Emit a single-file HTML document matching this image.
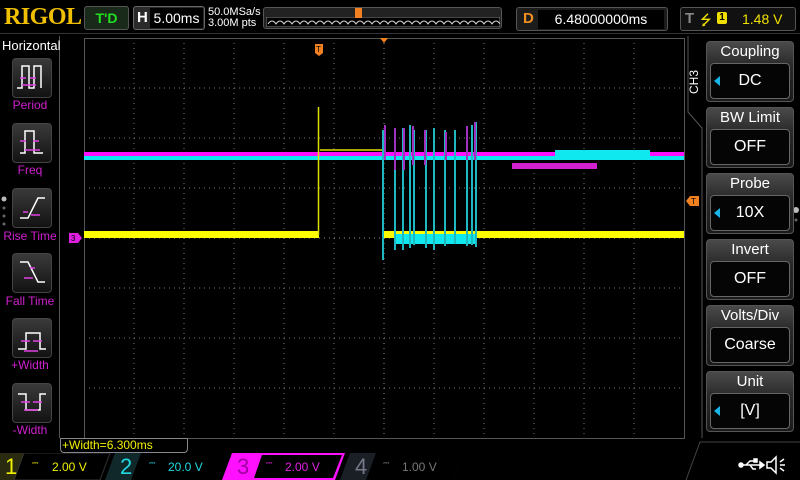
<!DOCTYPE html>
<html><head><meta charset="utf-8"><style>
*{margin:0;padding:0;box-sizing:border-box}
body{width:800px;height:480px;background:#000;overflow:hidden;position:relative;font-family:"Liberation Sans",sans-serif;color:#fff}
.a{position:absolute}
.lbl{position:absolute;left:0;width:60px;text-align:center;color:#d020d0;font-size:12px}
.btn{position:absolute;left:12px;width:40px;height:40px;border-radius:4px;background:linear-gradient(#3a3a3a,#121212);border:1px solid #444}
.mi{position:absolute;left:706px;width:88px;height:61px;border-radius:4px;background:linear-gradient(#4a4a4a,#2a2a2a 40%,#1a1a1a);border:1px solid #555}
.mi .h{position:absolute;top:1px;width:100%;text-align:center;font-size:15px;color:#fff}
.mi .v{position:absolute;left:3px;top:21px;width:80px;height:36px;border:1px solid #666;border-radius:4px;background:#050505;text-align:center;font-size:16px;line-height:34px}
.tri{position:absolute;left:3px;top:12px;width:0;height:0;border-top:5px solid transparent;border-bottom:5px solid transparent;border-right:6px solid #19b4e6}
</style></head><body>
<div class="a" style="left:4px;top:4px;font-family:'Liberation Serif',serif;font-weight:bold;font-size:24px;color:#f0c000;letter-spacing:-0.5px">RIGOL</div>
<div class="a" style="left:84px;top:6px;width:45px;height:24px;border:1px solid #555;border-radius:3px;background:#1a2a1a;color:#20e020;font-weight:bold;font-size:14px;text-align:center;line-height:22px">T'D</div>
<div class="a" style="left:133px;top:6px;width:72px;height:24px;border:1px solid #666;border-radius:3px;background:#2a2a2a"></div>
<div class="a" style="left:137px;top:9px;font-weight:bold;font-size:15px">H</div>
<div class="a" style="left:150px;top:8px;width:53px;height:20px;background:#000;font-size:14px;line-height:20px;text-align:center">5.00ms</div>
<div class="a" style="left:208px;top:7px;font-size:11px;line-height:11px">50.0MSa/s<br>3.00M pts</div>
<div class="a" style="left:263px;top:7px;width:239px;height:22px;border:1px solid #555;border-radius:3px;background:#222"></div>
<svg class="a" style="left:266px;top:17px" width="234" height="10"><rect x="0" y="0" width="234" height="10" fill="#000" stroke="#888"/><path d="M2 7 q4 -6 8 0 q4 -6 8 0 q4 -6 8 0 q4 -6 8 0 q4 -6 8 0 q4 -6 8 0 q4 -6 8 0 q4 -6 8 0 q4 -6 8 0 q4 -6 8 0 q4 -6 8 0 q4 -6 8 0 q4 -6 8 0 q4 -6 8 0 q4 -6 8 0 q4 -6 8 0 q4 -6 8 0 q4 -6 8 0 q4 -6 8 0 q4 -6 8 0 q4 -6 8 0 q4 -6 8 0 q4 -6 8 0 q4 -6 8 0 q4 -6 8 0 q4 -6 8 0 q4 -6 8 0 q4 -6 8 0 q4 -6 8 0" stroke="#ddd" fill="none"/></svg>
<div class="a" style="left:355px;top:8px;width:7px;height:10px;background:#f08020"></div>
<div class="a" style="left:516px;top:7px;width:152px;height:24px;border:1px solid #555;border-radius:3px;background:#1c1c1c"></div>
<div class="a" style="left:523px;top:10px;font-weight:bold;font-size:15px;color:#f09020">D</div>
<div class="a" style="left:538px;top:10px;width:126px;height:19px;background:#000;font-size:14px;text-align:center;line-height:19px">6.48000000ms</div>
<div class="a" style="left:680px;top:7px;width:116px;height:24px;border:1px solid #555;border-radius:3px;background:#111"></div>
<div class="a" style="left:685px;top:10px;font-weight:bold;font-size:15px;color:#888">T</div>
<div class="a" style="left:700px;top:10px;font-size:14px;color:#f0e000">⭍</div>
<div class="a" style="left:717px;top:12px;width:10px;height:12px;background:#f0e000;border-radius:2px;color:#000;font-size:10px;text-align:center;font-weight:bold;line-height:12px">1</div>
<div class="a" style="left:742px;top:11px;font-size:14px;color:#f0e000">1.48 V</div>
<div class="a" style="left:0;top:33px;width:800px;height:1px;background:#333"></div>

<div class="a" style="left:59px;top:36px;width:1px;height:402px;background:#555"></div>
<div class="a" style="left:2px;top:38px;font-size:13px">Horizontal</div>
<div class="btn" style="top:58px"></div><div class="lbl" style="top:98px">Period</div>
<div class="btn" style="top:123px"></div><div class="lbl" style="top:163px">Freq</div>
<div class="btn" style="top:188px"></div><div class="lbl" style="top:229px">Rise Time</div>
<div class="btn" style="top:253px"></div><div class="lbl" style="top:294px">Fall Time</div>
<div class="btn" style="top:318px"></div><div class="lbl" style="top:358px">+Width</div>
<div class="btn" style="top:383px"></div><div class="lbl" style="top:423px">-Width</div>
<svg class="a" style="left:0;top:0" width="60" height="440" fill="none" stroke-width="1.5">
<g stroke="#fff"><path d="M17 88 h5 v-22 h7 v22 h5 v-22 h7 v22"/><path d="M20 153 h5 v-22 h9 v22 h9"/><path d="M20 218 h8 l10 -20 h7"/><path d="M20 262 h8 l10 20 h7"/><path d="M18 349 h8 v-16 h14 v16 h6"/><path d="M18 394 h8 v16 h14 v-16 h6"/></g>
<g stroke="#e040e0"><path d="M20 78 h6 M30 78 h6 M22 85 h14 M20 141 h6 M33 141 h6 M25 150 h15 M23 212 h5 M31 215 h9 M30 268 h5 M24 278 h9 M21 341 h9 M33 341 h9 M24 351 h14 M21 402 h9 M33 402 h9 M24 410 h14"/></g>
<g fill="#bbb"><circle cx="4" cy="199" r="2.5"/><circle cx="4" cy="208" r="1.5" fill="#666"/><circle cx="4" cy="216" r="1.5" fill="#666"/><circle cx="4" cy="224" r="1.5" fill="#666"/></g>
</svg>

<svg class="a" style="left:0;top:0" width="800" height="480">
<g stroke="#777" stroke-width="1" stroke-dasharray="1 4">
<path d="M134 38V438M184 38V438M234 38V438M284 38V438M334 38V438M434 38V438M484 38V438M534 38V438M584 38V438M634 38V438"/>
<path d="M84 88H684M84 138H684M84 188H684M84 288H684M84 338H684M84 388H684"/>
<path d="M384 38V438M84 238H684" stroke="#999"/>
</g>
<rect x="84.5" y="38.5" width="600" height="400" fill="none" stroke="#555"/>
<rect x="84" y="152" width="600" height="5" fill="#ff10ff"/>
<rect x="84" y="156" width="600" height="4" fill="#10e8f0"/>
<rect x="555" y="150" width="95" height="10" fill="#10e8f0"/>
<rect x="512" y="163" width="85" height="6" fill="#d020d0"/>
<rect x="84" y="231" width="235" height="7" fill="#ffff00"/>
<rect x="384" y="231" width="300" height="7" fill="#ffff00"/>
<rect x="395" y="234" width="80" height="10" fill="#10e8f0"/>
<path d="M318.5 107 V235 M320 150 H383" stroke="#e0e000" stroke-width="1.5"/>
<g stroke-width="2">
<path d="M383 130 V260 M395 128 V250 M403 128 V250 M410 125 V248 M414 130 V245 M426 130 V248 M434 128 V250 M445 130 V246 M455 130 V244 M467 130 V246 M472 125 V245 M476 122 V247" stroke="#1fb8c0"/>
<path d="M385 125 V160 M395 128 V170 M404 128 V170 M413 126 V165 M425 130 V165 M446 132 V160 M467 126 V160 M475 122 V160" stroke="#a030c0"/>
</g>
<path d="M315 44 h8 v9 l-4 3 l-4 -3z" fill="#f08020"/><text x="316" y="52" font-size="8" fill="#000" font-family="Liberation Sans">T</text>
<path d="M380 38 h8 l-4 5z" fill="#f08020"/>
<path d="M69 233 h9 l4 5 l-4 5 h-9z" fill="#e020e0"/><text x="71" y="241" font-size="8" fill="#000" font-family="Liberation Sans">3</text>
<path d="M699 196 h-9 l-4 5 l4 5 h9z" fill="#f08020"/><text x="691" y="204" font-size="8" fill="#000" font-family="Liberation Sans">T</text>
<path d="M688 36 V112 L702 128 V438" stroke="#555" fill="none"/>
<path d="M700 442 H800 M700 442 L686 480" stroke="#444" fill="none"/>
<circle cx="796" cy="210" r="3" fill="#bbb"/><circle cx="796" cy="220" r="1.5" fill="#666"/>
<!-- usb -->
<g stroke="#fff" fill="#fff" stroke-width="1.5">
<path d="M741 465 H760" fill="none"/><circle cx="741" cy="465" r="2"/><path d="M760 462 l4 3 l-4 3z"/>
<path d="M746 465 l4 -4 h4 M750 465 l3 4 h3" fill="none"/><rect x="754" y="459" width="3" height="3"/>
<!-- speaker -->
<path d="M767 462 h4 l5 -5 v16 l-5 -5 h-4z" fill="none"/>
<path d="M780 462 l4 -3 M780 465 h5 M780 468 l4 3" fill="none"/>
</g>
</svg>
<div class="a" style="left:687px;top:94px;font-size:12px;transform:rotate(-90deg);transform-origin:left top">CH3</div>

<div class="mi" style="top:41px"><div class="h">Coupling</div><div class="v"><div class="tri"></div>DC</div></div>
<div class="mi" style="top:107px"><div class="h">BW Limit</div><div class="v">OFF</div></div>
<div class="mi" style="top:173px"><div class="h">Probe</div><div class="v"><div class="tri"></div>10X</div></div>
<div class="mi" style="top:239px"><div class="h">Invert</div><div class="v">OFF</div></div>
<div class="mi" style="top:305px"><div class="h">Volts/Div</div><div class="v">Coarse</div></div>
<div class="mi" style="top:371px"><div class="h">Unit</div><div class="v"><div class="tri"></div>[V]</div></div>

<div class="a" style="left:60px;top:438px;width:128px;height:15px;border:1px solid #888;border-radius:0 0 4px 4px;font-size:12px;color:#f0f000;line-height:13px;padding-left:1px">+Width=6.300ms</div>
<svg class="a" style="left:0;top:453px" width="700" height="27">
<path d="M0 0 H110 L100 27 H0z" fill="#2a2a10"/><path d="M24 0 H110 L100 27 H14z" fill="#000" stroke="#333"/>
<path d="M115 0 H228 L218 27 H105z" fill="#10282a"/><path d="M141 0 H228 L218 27 H131z" fill="#000"/>
<path d="M232 0 H345 L335 27 H222z" fill="#ff10ff"/><path d="M262 2 H342 L333 25 H254z" fill="#000"/>
<path d="M350 0 H463 L453 27 H340z" fill="#1a1f26"/><path d="M376 0 H463 L453 27 H366z" fill="#000"/>
</svg>
<div class="a" style="left:5px;top:455px;font-size:22px;color:#f0f000;line-height:24px">1</div>
<div class="a" style="left:32px;top:458px;font-size:8px;color:#f0f000">⎓</div>
<div class="a" style="left:52px;top:460px;font-size:12px;color:#f0f000">2.00 V</div>
<div class="a" style="left:120px;top:455px;font-size:22px;color:#20d8e0;line-height:24px">2</div>
<div class="a" style="left:149px;top:458px;font-size:8px;color:#20d8e0">⎓</div>
<div class="a" style="left:168px;top:460px;font-size:12px;color:#20d8e0">20.0 V</div>
<div class="a" style="left:237px;top:455px;font-size:22px;color:#a000a0;line-height:24px">3</div>
<div class="a" style="left:266px;top:458px;font-size:8px;color:#e020e0">⎓</div>
<div class="a" style="left:285px;top:460px;font-size:12px;color:#e020e0">2.00 V</div>
<div class="a" style="left:355px;top:455px;font-size:22px;color:#778;line-height:24px">4</div>
<div class="a" style="left:383px;top:458px;font-size:8px;color:#777">⎓</div>
<div class="a" style="left:402px;top:460px;font-size:12px;color:#777">1.00 V</div>
</body></html>
